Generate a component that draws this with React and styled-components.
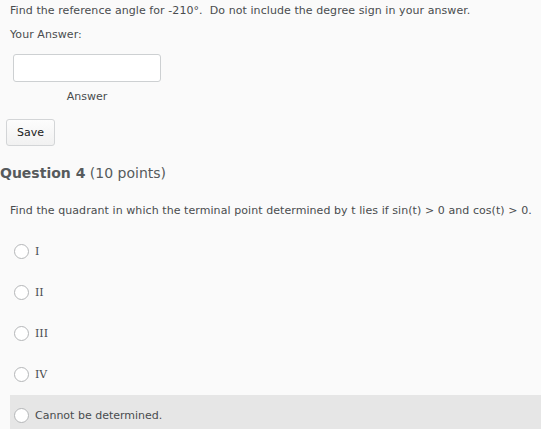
import React from "react";
import styled, { createGlobalStyle } from "styled-components";

const Global = createGlobalStyle`
  html, body { margin: 0; padding: 0; background: #fafafa; }
  body { font-family: "DejaVu Sans", Verdana, sans-serif; color: #494c4e; }
`;

const Page = styled.div`
  width: 541px;
  min-height: 429px;
  background: #fafafa;
  display: flex;
  flex-direction: column;
  & > * { flex: none; }
`;

const Prompt = styled.p`
  margin: 0;
  padding: ${(p) => p.$pad || "0 0 0 10px"};
  font-size: 11px;
  line-height: 14px;
  letter-spacing: 0.07px;
  white-space: pre;
`;

const AnswerBlock = styled.div`
  display: flex;
  flex-direction: column;
  align-items: center;
  width: 148px;
  margin: 12px 0 0 13px;
`;

const Input = styled.input`
  box-sizing: border-box;
  width: 148px;
  height: 28px;
  border: 1px solid #cdd0d2;
  border-radius: 3px;
  background: #fff;
  margin: 0;
`;

const Caption = styled.span`
  font-size: 11px;
  line-height: 14px;
  margin-top: 8px;
`;

const SaveButton = styled.button`
  align-self: flex-start;
  box-sizing: border-box;
  margin: 15px 0 0 6px;
  width: 49px;
  height: 27px;
  border: 1px solid #d3d5d7;
  border-radius: 3px;
  background: linear-gradient(#fdfdfd, #f1f1f1);
  font-family: "DejaVu Sans", Verdana, sans-serif;
  font-size: 11px;
  color: #202020;
  padding: 0;
`;

const Heading = styled.h2`
  margin: 18px 0 0 0;
  font-size: 14px;
  line-height: 18px;
  color: #565a5c;
  font-weight: normal;
  & b { font-weight: bold; }
`;

const Options = styled.div`
  display: flex;
  flex-direction: column;
  margin-top: 13px;
`;

const Option = styled.label`
  display: flex;
  align-items: center;
  height: 41px;
  margin-left: 10px;
  padding-left: 4px;
  background: ${(p) => (p.$hover ? "#e6e6e6" : "transparent")};
`;

const Circle = styled.span`
  box-sizing: border-box;
  width: 15px;
  height: 15px;
  border-radius: 50%;
  border: 1px solid #b4b6b8;
  background: #fff;
  flex: none;
`;

const OptText = styled.span`
  margin-left: 6px;
  font-size: 11px;
  font-family: ${(p) =>
    p.$serif ? '"DejaVu Serif", "Liberation Serif", serif' : '"DejaVu Sans", Verdana, sans-serif'};
  color: #494c4e;
`;

const options = [
  { t: "I", serif: true },
  { t: "II", serif: true },
  { t: "III", serif: true },
  { t: "IV", serif: true },
  { t: "Cannot be determined.", serif: false, hover: true },
];

export default function App() {
  return (
    <Page>
      <Global />
      <Prompt $pad="4px 0 0 10px">Find the reference angle for -210°.  Do not include the degree sign in your answer.</Prompt>
      <Prompt $pad="10px 0 0 10px">Your Answer:</Prompt>
      <AnswerBlock>
        <Input aria-label="Answer" />
        <Caption>Answer</Caption>
      </AnswerBlock>
      <SaveButton>Save</SaveButton>
      <Heading>
        <b>Question 4</b> (10 points)
      </Heading>
      <Prompt $pad="22px 0 0 10px">Find the quadrant in which the terminal point determined by t lies if sin(t) &gt; 0 and cos(t) &gt; 0.</Prompt>
      <Options>
        {options.map((o) => (
          <Option key={o.t} $hover={o.hover}>
            <Circle />
            <OptText $serif={o.serif}>{o.t}</OptText>
          </Option>
        ))}
      </Options>
    </Page>
  );
}
